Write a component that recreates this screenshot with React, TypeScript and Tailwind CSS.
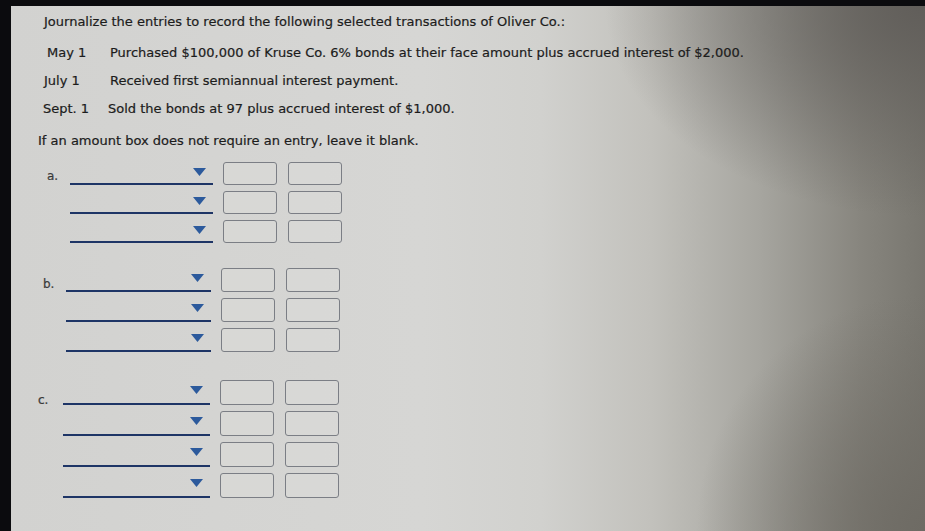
const transactions = [
  { date: 'May 1', text: 'Purchased $100,000 of Kruse Co. 6% bonds at their face amount plus accrued interest of $2,000.', ml: 'ml-[36px]', w: 'w-[63px]' },
  { date: 'July 1', text: 'Received first semiannual interest payment.', ml: 'ml-[33px]', w: 'w-[66px]' },
  { date: 'Sept. 1', text: 'Sold the bonds at 97 plus accrued interest of $1,000.', ml: 'ml-[32px]', w: 'w-[65px]' },
];

const Caret = () => (
  <svg width="13" height="8" viewBox="0 0 13 8" className="absolute right-[7px] top-[6px]">
    <polygon points="0,0 13,0 6.5,8" fill="#2c5a9c" />
  </svg>
);

const EntryRow = ({ selW, boxH }: { selW: string; boxH: string }) => (
  <div className="flex items-end">
    <div className={`relative ${selW} ${boxH} border-b-2 border-[#1e3566]`}>
      <Caret />
    </div>
    <div className={`ml-[10px] w-[54px] ${boxH} rounded-[3px] border-[1.5px] border-[#7b7e85] bg-[#e0e0de]/30`} />
    <div className={`ml-[11px] w-[54px] ${boxH} rounded-[3px] border-[1.5px] border-[#7b7e85] bg-[#e0e0de]/30`} />
  </div>
);

const Group = ({
  label,
  rows,
  ml,
  labelW,
  labelPt,
  selW,
  boxH,
  gap,
  mt,
}: {
  label: string;
  rows: number;
  ml: string;
  labelW: string;
  labelPt: string;
  selW: string;
  boxH: string;
  gap: string;
  mt: string;
}) => (
  <div className={`flex ${ml} ${mt}`}>
    <div className={`${labelW} ${labelPt} text-[12px] leading-4 text-[#444]`}>{label}</div>
    <div className={`flex flex-col ${gap}`}>
      {Array.from({ length: rows }).map((_, i) => (
        <EntryRow key={i} selW={selW} boxH={boxH} />
      ))}
    </div>
  </div>
);

export default function App() {
  return (
    <div
      className="min-h-[531px] w-full overflow-hidden border-t-[6px] border-l-[11px] border-[#0b0b0e] bg-[radial-gradient(ellipse_35%_40%_at_100%_0%,#615e5a_0%,rgba(97,94,90,0)_100%),radial-gradient(ellipse_25%_45%_at_100%_100%,#6e6b64_0%,rgba(110,107,100,0)_100%),linear-gradient(to_right,#d2d2d0_0%,#d6d6d4_45%,#d1d1ce_58%,#c2c1bc_70%,#a6a59f_82%,#87857e_93%,#78766f_100%)] font-['DejaVu_Sans',Verdana,sans-serif] text-[#1c1c1c] [-webkit-text-stroke:0.2px_#1c1c1c]"
    >
      <div className="pt-[8px] ml-[33px] text-[13px] leading-4">
        Journalize the entries to record the following selected transactions of Oliver Co.:
      </div>
      <div className="mt-[9px] flex flex-col">
        {transactions.map((t) => (
          <div key={t.date} className={`flex h-[28px] items-center ${t.ml} text-[13px]`}>
            <span className={`${t.w} shrink-0`}>{t.date}</span>
            <span>{t.text}</span>
          </div>
        ))}
      </div>
      <div className="mt-[10px] ml-[27px] text-[13px] leading-4">
        If an amount box does not require an entry, leave it blank.
      </div>

      <Group label="a." rows={3} ml="ml-[36px]" labelW="w-[23px]" labelPt="pt-[6px]" selW="w-[143px]" boxH="h-[23px]" gap="gap-[6px]" mt="mt-[13px]" />
      <Group label="b." rows={3} ml="ml-[32px]" labelW="w-[23px]" labelPt="pt-[8px]" selW="w-[145px]" boxH="h-[24px]" gap="gap-[6px]" mt="mt-[25px]" />
      <Group label="c." rows={4} ml="ml-[27px]" labelW="w-[25px]" labelPt="pt-[12px]" selW="w-[147px]" boxH="h-[25px]" gap="gap-[6px]" mt="mt-[28px]" />
    </div>
  );
}
